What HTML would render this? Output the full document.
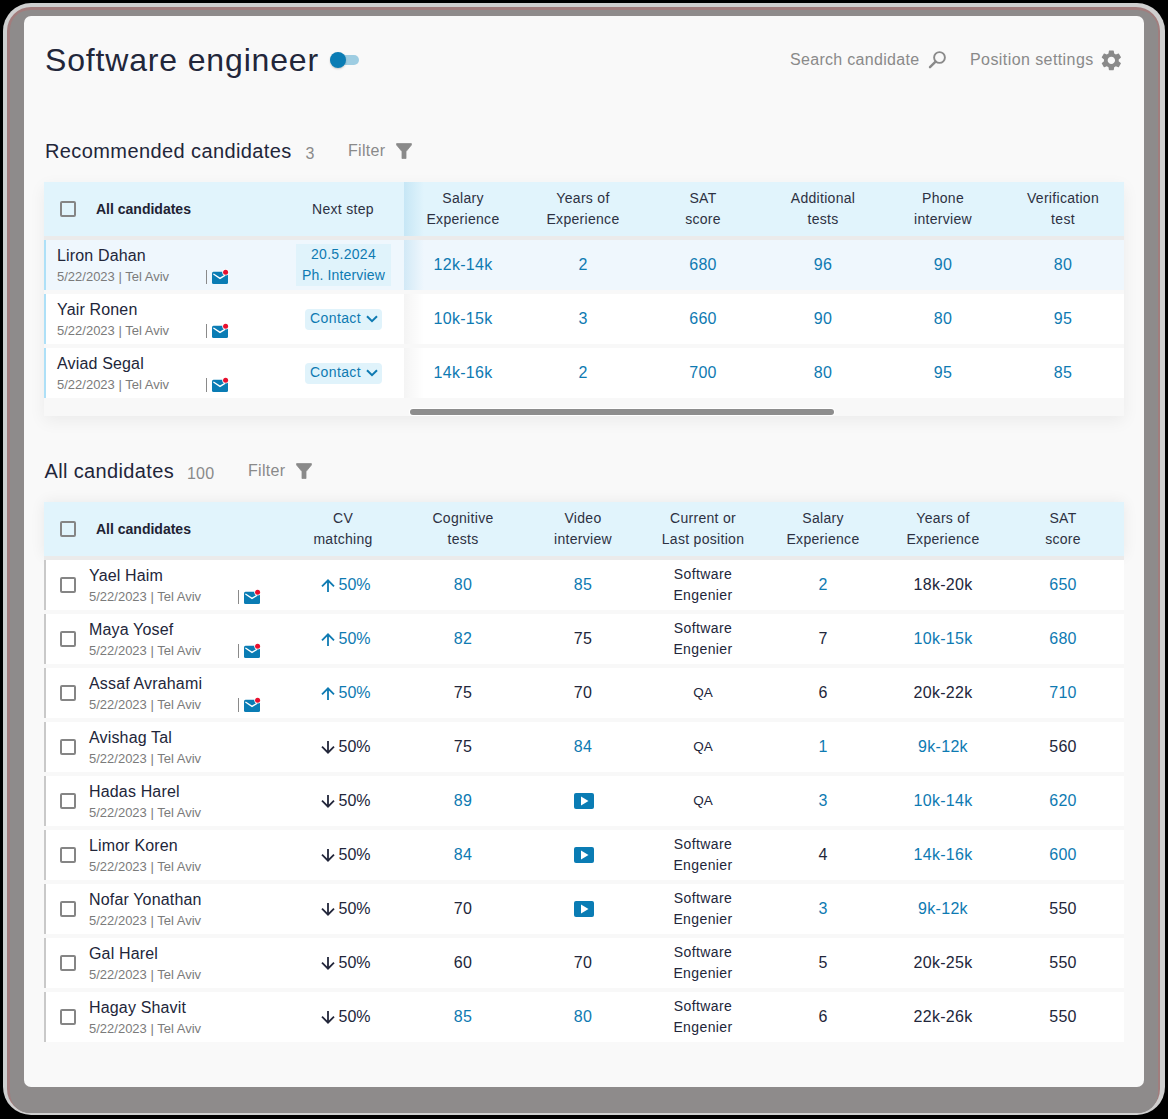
<!DOCTYPE html>
<html><head><meta charset="utf-8"><style>
html,body{margin:0;padding:0;}
body{width:1168px;height:1119px;background:#000;position:relative;overflow:hidden;font-family:"Liberation Sans", sans-serif;}
.t{position:absolute;white-space:nowrap;}
.r{position:absolute;}
</style></head><body>
<div class="r" style="left:3px;top:3px;width:1161.5px;height:1112px;background:#cfcfcf;border-radius:28px;"></div>
<div class="r" style="left:7px;top:7px;width:1153px;height:1106px;background:#a27d7d;border-radius:24px;"></div>
<div class="r" style="left:10px;top:10px;width:1147.7px;height:1103px;background:#8e8b8b;border-radius:20px;"></div>
<div class="r" style="left:24px;top:16px;width:1120px;height:1071px;background:#f9f9f9;border-radius:7px;"></div>
<div class="t" style="left:45px;top:40.91px;font-size:32px;line-height:38px;color:#22263a;letter-spacing:0.84px;">Software engineer</div>
<div class="r" style="left:330px;top:55px;width:29px;height:10px;background:#9ecde2;border-radius:5px;"></div>
<div class="r" style="left:330px;top:52px;width:16px;height:16px;background:#0a7cb4;border-radius:50%;box-shadow:0 1px 2px rgba(0,0,0,0.2);"></div>
<div class="t" style="left:790px;top:49.96px;font-size:16px;line-height:19px;color:#8a8a8a;letter-spacing:0.31px;">Search candidate</div>
<svg class="r" style="left:928px;top:51px" width="20" height="18" viewBox="0 0 20 18"><circle cx="11.5" cy="6.5" r="5.4" fill="none" stroke="#8a8a8a" stroke-width="1.9"/><line x1="7.6" y1="10.6" x2="2" y2="16.2" stroke="#8a8a8a" stroke-width="2.4" stroke-linecap="round"/></svg>
<div class="t" style="left:970px;top:49.96px;font-size:16px;line-height:19px;color:#8a8a8a;letter-spacing:0.42px;">Position settings</div>
<svg class="r" style="left:1098.7px;top:47.8px" width="24.7" height="24.7" viewBox="0 0 24 24"><path fill="#8a8a8a" d="M19.14 12.94c.04-.3.06-.61.06-.94 0-.32-.02-.64-.07-.94l2.03-1.58a.49.49 0 0 0 .12-.61l-1.92-3.32a.488.488 0 0 0-.59-.22l-2.39.96c-.5-.38-1.03-.7-1.62-.94l-.36-2.54a.484.484 0 0 0-.48-.41h-3.84c-.24 0-.43.17-.47.41l-.36 2.54c-.59.24-1.13.57-1.62.94l-2.39-.96c-.22-.08-.47 0-.59.22L2.74 8.87c-.12.21-.08.47.12.61l2.03 1.58c-.05.3-.09.63-.09.94s.02.64.07.94l-2.03 1.58a.49.49 0 0 0-.12.61l1.92 3.32c.12.22.37.29.59.22l2.39-.96c.5.38 1.03.7 1.62.94l.36 2.54c.05.24.24.41.48.41h3.84c.24 0 .44-.17.47-.41l.36-2.54c.59-.24 1.13-.56 1.62-.94l2.39.96c.22.08.47 0 .59-.22l1.92-3.32c.12-.22.07-.47-.12-.61l-2.01-1.58zM12 15.6c-1.98 0-3.6-1.62-3.6-3.6s1.62-3.6 3.6-3.6 3.6 1.62 3.6 3.6-1.62 3.6-3.6 3.6z"/></svg>
<div class="t" style="left:45px;top:139.07px;font-size:20px;line-height:24px;color:#22263a;letter-spacing:0.4px;">Recommended candidates</div>
<div class="t" style="left:305.5px;top:143.96px;font-size:16px;line-height:19px;color:#8a8a8a;">3</div>
<div class="t" style="left:348px;top:141.46px;font-size:16px;line-height:19px;color:#8a8a8a;letter-spacing:0.3px;">Filter</div>
<svg class="r" style="left:396px;top:143px" width="16" height="16" viewBox="0 0 16 16"><path fill="#8a8a8a" stroke="#8a8a8a" stroke-width="0.8" stroke-linejoin="round" d="M0.6 0.6 H15.4 V2 L10 8.6 V15.6 H6 V8.6 L0.6 2 Z"/></svg>
<div class="r" style="left:44px;top:182px;width:1080px;height:234px;background:#f8f8f8;box-shadow:0 5px 16px rgba(0,0,0,0.06);"></div>
<div class="r" style="left:44px;top:182px;width:1080px;height:54px;background:#e1f4fc;"></div>
<div class="r" style="left:44px;top:236px;width:1080px;height:4px;background:#ebebeb;"></div>
<div class="r" style="left:60px;top:201px;width:16px;height:16px;background:transparent;box-sizing:border-box;border:2px solid #858585;border-radius:2px;"></div>
<div class="t" style="left:96px;top:200.65px;font-size:14px;line-height:17px;color:#1e2233;font-weight:700;">All candidates</div>
<div class="t" style="left:283px;top:200.65px;font-size:14px;line-height:17px;color:#2d3142;letter-spacing:0.3px;width:120px;text-align:center;">Next step</div>
<div class="t" style="left:403px;top:189.65px;font-size:14px;line-height:17px;color:#2d3142;letter-spacing:0.3px;width:120px;text-align:center;">Salary</div>
<div class="t" style="left:403px;top:210.65px;font-size:14px;line-height:17px;color:#2d3142;letter-spacing:0.3px;width:120px;text-align:center;">Experience</div>
<div class="t" style="left:523px;top:189.65px;font-size:14px;line-height:17px;color:#2d3142;letter-spacing:0.3px;width:120px;text-align:center;">Years of</div>
<div class="t" style="left:523px;top:210.65px;font-size:14px;line-height:17px;color:#2d3142;letter-spacing:0.3px;width:120px;text-align:center;">Experience</div>
<div class="t" style="left:643px;top:189.65px;font-size:14px;line-height:17px;color:#2d3142;letter-spacing:0.3px;width:120px;text-align:center;">SAT</div>
<div class="t" style="left:643px;top:210.65px;font-size:14px;line-height:17px;color:#2d3142;letter-spacing:0.3px;width:120px;text-align:center;">score</div>
<div class="t" style="left:763px;top:189.65px;font-size:14px;line-height:17px;color:#2d3142;letter-spacing:0.3px;width:120px;text-align:center;">Additional</div>
<div class="t" style="left:763px;top:210.65px;font-size:14px;line-height:17px;color:#2d3142;letter-spacing:0.3px;width:120px;text-align:center;">tests</div>
<div class="t" style="left:883px;top:189.65px;font-size:14px;line-height:17px;color:#2d3142;letter-spacing:0.3px;width:120px;text-align:center;">Phone</div>
<div class="t" style="left:883px;top:210.65px;font-size:14px;line-height:17px;color:#2d3142;letter-spacing:0.3px;width:120px;text-align:center;">interview</div>
<div class="t" style="left:1003px;top:189.65px;font-size:14px;line-height:17px;color:#2d3142;letter-spacing:0.3px;width:120px;text-align:center;">Verification</div>
<div class="t" style="left:1003px;top:210.65px;font-size:14px;line-height:17px;color:#2d3142;letter-spacing:0.3px;width:120px;text-align:center;">test</div>
<div class="r" style="left:44px;top:240px;width:1080px;height:50px;background:#eff7fd;"></div>
<div class="r" style="left:44px;top:290px;width:1080px;height:4px;background:#f8f8f8;"></div>
<div class="r" style="left:44px;top:240px;width:2px;height:50px;background:#aee0f7;"></div>
<div class="t" style="left:57px;top:245.96px;font-size:16px;line-height:19px;color:#22263a;letter-spacing:0.16px;">Liron Dahan</div>
<div class="t" style="left:57px;top:268.50px;font-size:13px;line-height:16px;color:#7b7b7b;">5/22/2023 | Tel Aviv</div>
<div class="r" style="left:206px;top:270px;width:1px;height:14px;background:#8a8a8a;"></div>
<svg class="r" style="left:212px;top:269px" width="18" height="16" viewBox="0 0 18 16"><rect x="0" y="2.8" width="16" height="12.2" rx="1.5" fill="#0a7cb4"/><path d="M1.8 5.3 L8 9.4 L12.5 6.6" fill="none" stroke="#fff" stroke-width="1.3" stroke-linecap="round"/><circle cx="13.6" cy="3.3" r="3.3" fill="#fff"/><circle cx="13.6" cy="3.3" r="2.5" fill="#e8102e"/></svg>
<div class="t" style="left:403px;top:254.96px;font-size:16px;line-height:19px;color:#0e7ab2;letter-spacing:0.3px;width:120px;text-align:center;">12k-14k</div>
<div class="t" style="left:523px;top:254.96px;font-size:16px;line-height:19px;color:#0e7ab2;letter-spacing:0.3px;width:120px;text-align:center;">2</div>
<div class="t" style="left:643px;top:254.96px;font-size:16px;line-height:19px;color:#0e7ab2;letter-spacing:0.3px;width:120px;text-align:center;">680</div>
<div class="t" style="left:763px;top:254.96px;font-size:16px;line-height:19px;color:#0e7ab2;letter-spacing:0.3px;width:120px;text-align:center;">96</div>
<div class="t" style="left:883px;top:254.96px;font-size:16px;line-height:19px;color:#0e7ab2;letter-spacing:0.3px;width:120px;text-align:center;">90</div>
<div class="t" style="left:1003px;top:254.96px;font-size:16px;line-height:19px;color:#0e7ab2;letter-spacing:0.3px;width:120px;text-align:center;">80</div>
<div class="r" style="left:404px;top:240px;width:20px;height:50px;background:linear-gradient(to right, rgba(60,160,210,0.16), rgba(60,160,210,0));"></div>
<div class="r" style="left:44px;top:294px;width:1080px;height:50px;background:#ffffff;"></div>
<div class="r" style="left:44px;top:344px;width:1080px;height:4px;background:#f8f8f8;"></div>
<div class="r" style="left:44px;top:294px;width:2px;height:50px;background:#aee0f7;"></div>
<div class="t" style="left:57px;top:299.96px;font-size:16px;line-height:19px;color:#22263a;letter-spacing:0.16px;">Yair Ronen</div>
<div class="t" style="left:57px;top:322.50px;font-size:13px;line-height:16px;color:#7b7b7b;">5/22/2023 | Tel Aviv</div>
<div class="r" style="left:206px;top:324px;width:1px;height:14px;background:#8a8a8a;"></div>
<svg class="r" style="left:212px;top:323px" width="18" height="16" viewBox="0 0 18 16"><rect x="0" y="2.8" width="16" height="12.2" rx="1.5" fill="#0a7cb4"/><path d="M1.8 5.3 L8 9.4 L12.5 6.6" fill="none" stroke="#fff" stroke-width="1.3" stroke-linecap="round"/><circle cx="13.6" cy="3.3" r="3.3" fill="#fff"/><circle cx="13.6" cy="3.3" r="2.5" fill="#e8102e"/></svg>
<div class="t" style="left:403px;top:308.96px;font-size:16px;line-height:19px;color:#0e7ab2;letter-spacing:0.3px;width:120px;text-align:center;">10k-15k</div>
<div class="t" style="left:523px;top:308.96px;font-size:16px;line-height:19px;color:#0e7ab2;letter-spacing:0.3px;width:120px;text-align:center;">3</div>
<div class="t" style="left:643px;top:308.96px;font-size:16px;line-height:19px;color:#0e7ab2;letter-spacing:0.3px;width:120px;text-align:center;">660</div>
<div class="t" style="left:763px;top:308.96px;font-size:16px;line-height:19px;color:#0e7ab2;letter-spacing:0.3px;width:120px;text-align:center;">90</div>
<div class="t" style="left:883px;top:308.96px;font-size:16px;line-height:19px;color:#0e7ab2;letter-spacing:0.3px;width:120px;text-align:center;">80</div>
<div class="t" style="left:1003px;top:308.96px;font-size:16px;line-height:19px;color:#0e7ab2;letter-spacing:0.3px;width:120px;text-align:center;">95</div>
<div class="r" style="left:404px;top:294px;width:20px;height:50px;background:linear-gradient(to right, rgba(0,0,0,0.045), rgba(0,0,0,0));"></div>
<div class="r" style="left:44px;top:348px;width:1080px;height:50px;background:#ffffff;"></div>
<div class="r" style="left:44px;top:348px;width:2px;height:50px;background:#aee0f7;"></div>
<div class="t" style="left:57px;top:353.96px;font-size:16px;line-height:19px;color:#22263a;letter-spacing:0.16px;">Aviad Segal</div>
<div class="t" style="left:57px;top:376.50px;font-size:13px;line-height:16px;color:#7b7b7b;">5/22/2023 | Tel Aviv</div>
<div class="r" style="left:206px;top:378px;width:1px;height:14px;background:#8a8a8a;"></div>
<svg class="r" style="left:212px;top:377px" width="18" height="16" viewBox="0 0 18 16"><rect x="0" y="2.8" width="16" height="12.2" rx="1.5" fill="#0a7cb4"/><path d="M1.8 5.3 L8 9.4 L12.5 6.6" fill="none" stroke="#fff" stroke-width="1.3" stroke-linecap="round"/><circle cx="13.6" cy="3.3" r="3.3" fill="#fff"/><circle cx="13.6" cy="3.3" r="2.5" fill="#e8102e"/></svg>
<div class="t" style="left:403px;top:362.96px;font-size:16px;line-height:19px;color:#0e7ab2;letter-spacing:0.3px;width:120px;text-align:center;">14k-16k</div>
<div class="t" style="left:523px;top:362.96px;font-size:16px;line-height:19px;color:#0e7ab2;letter-spacing:0.3px;width:120px;text-align:center;">2</div>
<div class="t" style="left:643px;top:362.96px;font-size:16px;line-height:19px;color:#0e7ab2;letter-spacing:0.3px;width:120px;text-align:center;">700</div>
<div class="t" style="left:763px;top:362.96px;font-size:16px;line-height:19px;color:#0e7ab2;letter-spacing:0.3px;width:120px;text-align:center;">80</div>
<div class="t" style="left:883px;top:362.96px;font-size:16px;line-height:19px;color:#0e7ab2;letter-spacing:0.3px;width:120px;text-align:center;">95</div>
<div class="t" style="left:1003px;top:362.96px;font-size:16px;line-height:19px;color:#0e7ab2;letter-spacing:0.3px;width:120px;text-align:center;">85</div>
<div class="r" style="left:404px;top:348px;width:20px;height:50px;background:linear-gradient(to right, rgba(0,0,0,0.045), rgba(0,0,0,0));"></div>
<div class="r" style="left:296px;top:244px;width:95px;height:42px;background:#e0f3fb;"></div>
<div class="t" style="left:296px;top:245.65px;font-size:14px;line-height:17px;color:#0e7ab2;letter-spacing:0.3px;width:95px;text-align:center;">20.5.2024</div>
<div class="t" style="left:296px;top:266.65px;font-size:14px;line-height:17px;color:#0e7ab2;letter-spacing:0.16px;width:95px;text-align:center;">Ph. Interview</div>
<div class="r" style="left:305px;top:309px;width:77px;height:21px;background:#e0f3fb;border-radius:4px;"></div>
<div class="t" style="left:310px;top:310.25px;font-size:14px;line-height:17px;color:#0e7ab2;letter-spacing:0.4px;">Contact</div>
<svg class="r" style="left:366px;top:315px" width="12" height="8" viewBox="0 0 12 8"><path d="M1 1.2 L6 6.2 L11 1.2" fill="none" stroke="#0e7ab2" stroke-width="2"/></svg>
<div class="r" style="left:305px;top:363px;width:77px;height:21px;background:#e0f3fb;border-radius:4px;"></div>
<div class="t" style="left:310px;top:364.25px;font-size:14px;line-height:17px;color:#0e7ab2;letter-spacing:0.4px;">Contact</div>
<svg class="r" style="left:366px;top:369px" width="12" height="8" viewBox="0 0 12 8"><path d="M1 1.2 L6 6.2 L11 1.2" fill="none" stroke="#0e7ab2" stroke-width="2"/></svg>
<div class="r" style="left:404px;top:182px;width:20px;height:54px;background:linear-gradient(to right, rgba(60,160,210,0.16), rgba(60,160,210,0));"></div>
<div class="r" style="left:410px;top:409px;width:424px;height:6px;background:#8d8d8d;border-radius:3px;box-shadow:0 0 0 1px #fff;"></div>
<div class="t" style="left:44.5px;top:459.07px;font-size:20px;line-height:24px;color:#22263a;letter-spacing:0.36px;">All candidates</div>
<div class="t" style="left:187px;top:463.96px;font-size:16px;line-height:19px;color:#8a8a8a;letter-spacing:0.2px;">100</div>
<div class="t" style="left:248px;top:460.96px;font-size:16px;line-height:19px;color:#8a8a8a;letter-spacing:0.3px;">Filter</div>
<svg class="r" style="left:296px;top:463px" width="16" height="16" viewBox="0 0 16 16"><path fill="#8a8a8a" stroke="#8a8a8a" stroke-width="0.8" stroke-linejoin="round" d="M0.6 0.6 H15.4 V2 L10 8.6 V15.6 H6 V8.6 L0.6 2 Z"/></svg>
<div class="r" style="left:44px;top:502px;width:1080px;height:540px;background:#f8f8f8;"></div>
<div class="r" style="left:44px;top:502px;width:1080px;height:54px;background:#e1f4fc;box-shadow:0 0 14px rgba(0,0,0,0.07);"></div>
<div class="r" style="left:44px;top:556px;width:1080px;height:4px;background:#ebebeb;"></div>
<div class="r" style="left:60px;top:521px;width:16px;height:16px;background:transparent;box-sizing:border-box;border:2px solid #858585;border-radius:2px;"></div>
<div class="t" style="left:96px;top:520.65px;font-size:14px;line-height:17px;color:#1e2233;font-weight:700;">All candidates</div>
<div class="t" style="left:283px;top:509.65px;font-size:14px;line-height:17px;color:#2d3142;letter-spacing:0.3px;width:120px;text-align:center;">CV</div>
<div class="t" style="left:283px;top:530.65px;font-size:14px;line-height:17px;color:#2d3142;letter-spacing:0.3px;width:120px;text-align:center;">matching</div>
<div class="t" style="left:403px;top:509.65px;font-size:14px;line-height:17px;color:#2d3142;letter-spacing:0.3px;width:120px;text-align:center;">Cognitive</div>
<div class="t" style="left:403px;top:530.65px;font-size:14px;line-height:17px;color:#2d3142;letter-spacing:0.3px;width:120px;text-align:center;">tests</div>
<div class="t" style="left:523px;top:509.65px;font-size:14px;line-height:17px;color:#2d3142;letter-spacing:0.3px;width:120px;text-align:center;">Video</div>
<div class="t" style="left:523px;top:530.65px;font-size:14px;line-height:17px;color:#2d3142;letter-spacing:0.3px;width:120px;text-align:center;">interview</div>
<div class="t" style="left:643px;top:509.65px;font-size:14px;line-height:17px;color:#2d3142;letter-spacing:0.3px;width:120px;text-align:center;">Current or</div>
<div class="t" style="left:643px;top:530.65px;font-size:14px;line-height:17px;color:#2d3142;letter-spacing:0.3px;width:120px;text-align:center;">Last position</div>
<div class="t" style="left:763px;top:509.65px;font-size:14px;line-height:17px;color:#2d3142;letter-spacing:0.3px;width:120px;text-align:center;">Salary</div>
<div class="t" style="left:763px;top:530.65px;font-size:14px;line-height:17px;color:#2d3142;letter-spacing:0.3px;width:120px;text-align:center;">Experience</div>
<div class="t" style="left:883px;top:509.65px;font-size:14px;line-height:17px;color:#2d3142;letter-spacing:0.3px;width:120px;text-align:center;">Years of</div>
<div class="t" style="left:883px;top:530.65px;font-size:14px;line-height:17px;color:#2d3142;letter-spacing:0.3px;width:120px;text-align:center;">Experience</div>
<div class="t" style="left:1003px;top:509.65px;font-size:14px;line-height:17px;color:#2d3142;letter-spacing:0.3px;width:120px;text-align:center;">SAT</div>
<div class="t" style="left:1003px;top:530.65px;font-size:14px;line-height:17px;color:#2d3142;letter-spacing:0.3px;width:120px;text-align:center;">score</div>
<div class="r" style="left:44px;top:560px;width:1080px;height:50px;background:#ffffff;"></div>
<div class="r" style="left:44px;top:560px;width:2px;height:50px;background:#c9c9c9;"></div>
<div class="r" style="left:60px;top:577px;width:16px;height:16px;background:transparent;box-sizing:border-box;border:2px solid #858585;border-radius:2px;"></div>
<div class="t" style="left:89px;top:565.96px;font-size:16px;line-height:19px;color:#22263a;letter-spacing:0.16px;">Yael Haim</div>
<div class="t" style="left:89px;top:588.50px;font-size:13px;line-height:16px;color:#7b7b7b;">5/22/2023 | Tel Aviv</div>
<div class="r" style="left:238px;top:590px;width:1px;height:14px;background:#8a8a8a;"></div>
<svg class="r" style="left:244px;top:589px" width="18" height="16" viewBox="0 0 18 16"><rect x="0" y="2.8" width="16" height="12.2" rx="1.5" fill="#0a7cb4"/><path d="M1.8 5.3 L8 9.4 L12.5 6.6" fill="none" stroke="#fff" stroke-width="1.3" stroke-linecap="round"/><circle cx="13.6" cy="3.3" r="3.3" fill="#fff"/><circle cx="13.6" cy="3.3" r="2.5" fill="#e8102e"/></svg>
<svg class="r" style="left:321px;top:579px" width="14" height="14" viewBox="0 0 14 14"><path d="M7 1.5 V13 M1 7.3 L7 1.3 L13 7.3" fill="none" stroke="#0e7ab2" stroke-width="1.8"/></svg>
<div class="t" style="left:338.5px;top:575.46px;font-size:16px;line-height:19px;color:#0e7ab2;">50%</div>
<div class="t" style="left:403px;top:574.96px;font-size:16px;line-height:19px;color:#0e7ab2;letter-spacing:0.3px;width:120px;text-align:center;">80</div>
<div class="t" style="left:523px;top:574.96px;font-size:16px;line-height:19px;color:#0e7ab2;letter-spacing:0.3px;width:120px;text-align:center;">85</div>
<div class="t" style="left:643px;top:565.65px;font-size:14px;line-height:17px;color:#22263a;letter-spacing:0.4px;width:120px;text-align:center;">Software</div>
<div class="t" style="left:643px;top:586.65px;font-size:14px;line-height:17px;color:#22263a;letter-spacing:0.4px;width:120px;text-align:center;">Engenier</div>
<div class="t" style="left:763px;top:574.96px;font-size:16px;line-height:19px;color:#0e7ab2;letter-spacing:0.3px;width:120px;text-align:center;">2</div>
<div class="t" style="left:883px;top:574.96px;font-size:16px;line-height:19px;color:#22263a;letter-spacing:0.3px;width:120px;text-align:center;">18k-20k</div>
<div class="t" style="left:1003px;top:574.96px;font-size:16px;line-height:19px;color:#0e7ab2;letter-spacing:0.3px;width:120px;text-align:center;">650</div>
<div class="r" style="left:44px;top:614px;width:1080px;height:50px;background:#ffffff;"></div>
<div class="r" style="left:44px;top:614px;width:2px;height:50px;background:#c9c9c9;"></div>
<div class="r" style="left:60px;top:631px;width:16px;height:16px;background:transparent;box-sizing:border-box;border:2px solid #858585;border-radius:2px;"></div>
<div class="t" style="left:89px;top:619.96px;font-size:16px;line-height:19px;color:#22263a;letter-spacing:0.16px;">Maya Yosef</div>
<div class="t" style="left:89px;top:642.50px;font-size:13px;line-height:16px;color:#7b7b7b;">5/22/2023 | Tel Aviv</div>
<div class="r" style="left:238px;top:644px;width:1px;height:14px;background:#8a8a8a;"></div>
<svg class="r" style="left:244px;top:643px" width="18" height="16" viewBox="0 0 18 16"><rect x="0" y="2.8" width="16" height="12.2" rx="1.5" fill="#0a7cb4"/><path d="M1.8 5.3 L8 9.4 L12.5 6.6" fill="none" stroke="#fff" stroke-width="1.3" stroke-linecap="round"/><circle cx="13.6" cy="3.3" r="3.3" fill="#fff"/><circle cx="13.6" cy="3.3" r="2.5" fill="#e8102e"/></svg>
<svg class="r" style="left:321px;top:633px" width="14" height="14" viewBox="0 0 14 14"><path d="M7 1.5 V13 M1 7.3 L7 1.3 L13 7.3" fill="none" stroke="#0e7ab2" stroke-width="1.8"/></svg>
<div class="t" style="left:338.5px;top:629.46px;font-size:16px;line-height:19px;color:#0e7ab2;">50%</div>
<div class="t" style="left:403px;top:628.96px;font-size:16px;line-height:19px;color:#0e7ab2;letter-spacing:0.3px;width:120px;text-align:center;">82</div>
<div class="t" style="left:523px;top:628.96px;font-size:16px;line-height:19px;color:#22263a;letter-spacing:0.3px;width:120px;text-align:center;">75</div>
<div class="t" style="left:643px;top:619.65px;font-size:14px;line-height:17px;color:#22263a;letter-spacing:0.4px;width:120px;text-align:center;">Software</div>
<div class="t" style="left:643px;top:640.65px;font-size:14px;line-height:17px;color:#22263a;letter-spacing:0.4px;width:120px;text-align:center;">Engenier</div>
<div class="t" style="left:763px;top:628.96px;font-size:16px;line-height:19px;color:#22263a;letter-spacing:0.3px;width:120px;text-align:center;">7</div>
<div class="t" style="left:883px;top:628.96px;font-size:16px;line-height:19px;color:#0e7ab2;letter-spacing:0.3px;width:120px;text-align:center;">10k-15k</div>
<div class="t" style="left:1003px;top:628.96px;font-size:16px;line-height:19px;color:#0e7ab2;letter-spacing:0.3px;width:120px;text-align:center;">680</div>
<div class="r" style="left:44px;top:668px;width:1080px;height:50px;background:#ffffff;"></div>
<div class="r" style="left:44px;top:668px;width:2px;height:50px;background:#c9c9c9;"></div>
<div class="r" style="left:60px;top:685px;width:16px;height:16px;background:transparent;box-sizing:border-box;border:2px solid #858585;border-radius:2px;"></div>
<div class="t" style="left:89px;top:673.96px;font-size:16px;line-height:19px;color:#22263a;letter-spacing:0.16px;">Assaf Avrahami</div>
<div class="t" style="left:89px;top:696.50px;font-size:13px;line-height:16px;color:#7b7b7b;">5/22/2023 | Tel Aviv</div>
<div class="r" style="left:238px;top:698px;width:1px;height:14px;background:#8a8a8a;"></div>
<svg class="r" style="left:244px;top:697px" width="18" height="16" viewBox="0 0 18 16"><rect x="0" y="2.8" width="16" height="12.2" rx="1.5" fill="#0a7cb4"/><path d="M1.8 5.3 L8 9.4 L12.5 6.6" fill="none" stroke="#fff" stroke-width="1.3" stroke-linecap="round"/><circle cx="13.6" cy="3.3" r="3.3" fill="#fff"/><circle cx="13.6" cy="3.3" r="2.5" fill="#e8102e"/></svg>
<svg class="r" style="left:321px;top:687px" width="14" height="14" viewBox="0 0 14 14"><path d="M7 1.5 V13 M1 7.3 L7 1.3 L13 7.3" fill="none" stroke="#0e7ab2" stroke-width="1.8"/></svg>
<div class="t" style="left:338.5px;top:683.46px;font-size:16px;line-height:19px;color:#0e7ab2;">50%</div>
<div class="t" style="left:403px;top:682.96px;font-size:16px;line-height:19px;color:#22263a;letter-spacing:0.3px;width:120px;text-align:center;">75</div>
<div class="t" style="left:523px;top:682.96px;font-size:16px;line-height:19px;color:#22263a;letter-spacing:0.3px;width:120px;text-align:center;">70</div>
<div class="t" style="left:643px;top:685.32px;font-size:13.5px;line-height:16px;color:#22263a;width:120px;text-align:center;">QA</div>
<div class="t" style="left:763px;top:682.96px;font-size:16px;line-height:19px;color:#22263a;letter-spacing:0.3px;width:120px;text-align:center;">6</div>
<div class="t" style="left:883px;top:682.96px;font-size:16px;line-height:19px;color:#22263a;letter-spacing:0.3px;width:120px;text-align:center;">20k-22k</div>
<div class="t" style="left:1003px;top:682.96px;font-size:16px;line-height:19px;color:#0e7ab2;letter-spacing:0.3px;width:120px;text-align:center;">710</div>
<div class="r" style="left:44px;top:722px;width:1080px;height:50px;background:#ffffff;"></div>
<div class="r" style="left:44px;top:722px;width:2px;height:50px;background:#c9c9c9;"></div>
<div class="r" style="left:60px;top:739px;width:16px;height:16px;background:transparent;box-sizing:border-box;border:2px solid #858585;border-radius:2px;"></div>
<div class="t" style="left:89px;top:727.96px;font-size:16px;line-height:19px;color:#22263a;letter-spacing:0.16px;">Avishag Tal</div>
<div class="t" style="left:89px;top:750.50px;font-size:13px;line-height:16px;color:#7b7b7b;">5/22/2023 | Tel Aviv</div>
<svg class="r" style="left:321px;top:741px" width="14" height="14" viewBox="0 0 14 14"><path d="M7 0 V11.5 M1 5.7 L7 11.7 L13 5.7" fill="none" stroke="#22263a" stroke-width="1.8"/></svg>
<div class="t" style="left:338.5px;top:737.46px;font-size:16px;line-height:19px;color:#22263a;">50%</div>
<div class="t" style="left:403px;top:736.96px;font-size:16px;line-height:19px;color:#22263a;letter-spacing:0.3px;width:120px;text-align:center;">75</div>
<div class="t" style="left:523px;top:736.96px;font-size:16px;line-height:19px;color:#0e7ab2;letter-spacing:0.3px;width:120px;text-align:center;">84</div>
<div class="t" style="left:643px;top:739.32px;font-size:13.5px;line-height:16px;color:#22263a;width:120px;text-align:center;">QA</div>
<div class="t" style="left:763px;top:736.96px;font-size:16px;line-height:19px;color:#0e7ab2;letter-spacing:0.3px;width:120px;text-align:center;">1</div>
<div class="t" style="left:883px;top:736.96px;font-size:16px;line-height:19px;color:#0e7ab2;letter-spacing:0.3px;width:120px;text-align:center;">9k-12k</div>
<div class="t" style="left:1003px;top:736.96px;font-size:16px;line-height:19px;color:#22263a;letter-spacing:0.3px;width:120px;text-align:center;">560</div>
<div class="r" style="left:44px;top:776px;width:1080px;height:50px;background:#ffffff;"></div>
<div class="r" style="left:44px;top:776px;width:2px;height:50px;background:#c9c9c9;"></div>
<div class="r" style="left:60px;top:793px;width:16px;height:16px;background:transparent;box-sizing:border-box;border:2px solid #858585;border-radius:2px;"></div>
<div class="t" style="left:89px;top:781.96px;font-size:16px;line-height:19px;color:#22263a;letter-spacing:0.16px;">Hadas Harel</div>
<div class="t" style="left:89px;top:804.50px;font-size:13px;line-height:16px;color:#7b7b7b;">5/22/2023 | Tel Aviv</div>
<svg class="r" style="left:321px;top:795px" width="14" height="14" viewBox="0 0 14 14"><path d="M7 0 V11.5 M1 5.7 L7 11.7 L13 5.7" fill="none" stroke="#22263a" stroke-width="1.8"/></svg>
<div class="t" style="left:338.5px;top:791.46px;font-size:16px;line-height:19px;color:#22263a;">50%</div>
<div class="t" style="left:403px;top:790.96px;font-size:16px;line-height:19px;color:#0e7ab2;letter-spacing:0.3px;width:120px;text-align:center;">89</div>
<svg class="r" style="left:574px;top:793px" width="20" height="16" viewBox="0 0 20 16"><rect width="20" height="16" rx="2" fill="#0a7cb4"/><path d="M7 3.6 V12.5 L14.5 8 Z" fill="#fff"/></svg>
<div class="t" style="left:643px;top:793.32px;font-size:13.5px;line-height:16px;color:#22263a;width:120px;text-align:center;">QA</div>
<div class="t" style="left:763px;top:790.96px;font-size:16px;line-height:19px;color:#0e7ab2;letter-spacing:0.3px;width:120px;text-align:center;">3</div>
<div class="t" style="left:883px;top:790.96px;font-size:16px;line-height:19px;color:#0e7ab2;letter-spacing:0.3px;width:120px;text-align:center;">10k-14k</div>
<div class="t" style="left:1003px;top:790.96px;font-size:16px;line-height:19px;color:#0e7ab2;letter-spacing:0.3px;width:120px;text-align:center;">620</div>
<div class="r" style="left:44px;top:830px;width:1080px;height:50px;background:#ffffff;"></div>
<div class="r" style="left:44px;top:830px;width:2px;height:50px;background:#c9c9c9;"></div>
<div class="r" style="left:60px;top:847px;width:16px;height:16px;background:transparent;box-sizing:border-box;border:2px solid #858585;border-radius:2px;"></div>
<div class="t" style="left:89px;top:835.96px;font-size:16px;line-height:19px;color:#22263a;letter-spacing:0.16px;">Limor Koren</div>
<div class="t" style="left:89px;top:858.50px;font-size:13px;line-height:16px;color:#7b7b7b;">5/22/2023 | Tel Aviv</div>
<svg class="r" style="left:321px;top:849px" width="14" height="14" viewBox="0 0 14 14"><path d="M7 0 V11.5 M1 5.7 L7 11.7 L13 5.7" fill="none" stroke="#22263a" stroke-width="1.8"/></svg>
<div class="t" style="left:338.5px;top:845.46px;font-size:16px;line-height:19px;color:#22263a;">50%</div>
<div class="t" style="left:403px;top:844.96px;font-size:16px;line-height:19px;color:#0e7ab2;letter-spacing:0.3px;width:120px;text-align:center;">84</div>
<svg class="r" style="left:574px;top:847px" width="20" height="16" viewBox="0 0 20 16"><rect width="20" height="16" rx="2" fill="#0a7cb4"/><path d="M7 3.6 V12.5 L14.5 8 Z" fill="#fff"/></svg>
<div class="t" style="left:643px;top:835.65px;font-size:14px;line-height:17px;color:#22263a;letter-spacing:0.4px;width:120px;text-align:center;">Software</div>
<div class="t" style="left:643px;top:856.65px;font-size:14px;line-height:17px;color:#22263a;letter-spacing:0.4px;width:120px;text-align:center;">Engenier</div>
<div class="t" style="left:763px;top:844.96px;font-size:16px;line-height:19px;color:#22263a;letter-spacing:0.3px;width:120px;text-align:center;">4</div>
<div class="t" style="left:883px;top:844.96px;font-size:16px;line-height:19px;color:#0e7ab2;letter-spacing:0.3px;width:120px;text-align:center;">14k-16k</div>
<div class="t" style="left:1003px;top:844.96px;font-size:16px;line-height:19px;color:#0e7ab2;letter-spacing:0.3px;width:120px;text-align:center;">600</div>
<div class="r" style="left:44px;top:884px;width:1080px;height:50px;background:#ffffff;"></div>
<div class="r" style="left:44px;top:884px;width:2px;height:50px;background:#c9c9c9;"></div>
<div class="r" style="left:60px;top:901px;width:16px;height:16px;background:transparent;box-sizing:border-box;border:2px solid #858585;border-radius:2px;"></div>
<div class="t" style="left:89px;top:889.96px;font-size:16px;line-height:19px;color:#22263a;letter-spacing:0.16px;">Nofar Yonathan</div>
<div class="t" style="left:89px;top:912.50px;font-size:13px;line-height:16px;color:#7b7b7b;">5/22/2023 | Tel Aviv</div>
<svg class="r" style="left:321px;top:903px" width="14" height="14" viewBox="0 0 14 14"><path d="M7 0 V11.5 M1 5.7 L7 11.7 L13 5.7" fill="none" stroke="#22263a" stroke-width="1.8"/></svg>
<div class="t" style="left:338.5px;top:899.46px;font-size:16px;line-height:19px;color:#22263a;">50%</div>
<div class="t" style="left:403px;top:898.96px;font-size:16px;line-height:19px;color:#22263a;letter-spacing:0.3px;width:120px;text-align:center;">70</div>
<svg class="r" style="left:574px;top:901px" width="20" height="16" viewBox="0 0 20 16"><rect width="20" height="16" rx="2" fill="#0a7cb4"/><path d="M7 3.6 V12.5 L14.5 8 Z" fill="#fff"/></svg>
<div class="t" style="left:643px;top:889.65px;font-size:14px;line-height:17px;color:#22263a;letter-spacing:0.4px;width:120px;text-align:center;">Software</div>
<div class="t" style="left:643px;top:910.65px;font-size:14px;line-height:17px;color:#22263a;letter-spacing:0.4px;width:120px;text-align:center;">Engenier</div>
<div class="t" style="left:763px;top:898.96px;font-size:16px;line-height:19px;color:#0e7ab2;letter-spacing:0.3px;width:120px;text-align:center;">3</div>
<div class="t" style="left:883px;top:898.96px;font-size:16px;line-height:19px;color:#0e7ab2;letter-spacing:0.3px;width:120px;text-align:center;">9k-12k</div>
<div class="t" style="left:1003px;top:898.96px;font-size:16px;line-height:19px;color:#22263a;letter-spacing:0.3px;width:120px;text-align:center;">550</div>
<div class="r" style="left:44px;top:938px;width:1080px;height:50px;background:#ffffff;"></div>
<div class="r" style="left:44px;top:938px;width:2px;height:50px;background:#c9c9c9;"></div>
<div class="r" style="left:60px;top:955px;width:16px;height:16px;background:transparent;box-sizing:border-box;border:2px solid #858585;border-radius:2px;"></div>
<div class="t" style="left:89px;top:943.96px;font-size:16px;line-height:19px;color:#22263a;letter-spacing:0.16px;">Gal Harel</div>
<div class="t" style="left:89px;top:966.50px;font-size:13px;line-height:16px;color:#7b7b7b;">5/22/2023 | Tel Aviv</div>
<svg class="r" style="left:321px;top:957px" width="14" height="14" viewBox="0 0 14 14"><path d="M7 0 V11.5 M1 5.7 L7 11.7 L13 5.7" fill="none" stroke="#22263a" stroke-width="1.8"/></svg>
<div class="t" style="left:338.5px;top:953.46px;font-size:16px;line-height:19px;color:#22263a;">50%</div>
<div class="t" style="left:403px;top:952.96px;font-size:16px;line-height:19px;color:#22263a;letter-spacing:0.3px;width:120px;text-align:center;">60</div>
<div class="t" style="left:523px;top:952.96px;font-size:16px;line-height:19px;color:#22263a;letter-spacing:0.3px;width:120px;text-align:center;">70</div>
<div class="t" style="left:643px;top:943.65px;font-size:14px;line-height:17px;color:#22263a;letter-spacing:0.4px;width:120px;text-align:center;">Software</div>
<div class="t" style="left:643px;top:964.65px;font-size:14px;line-height:17px;color:#22263a;letter-spacing:0.4px;width:120px;text-align:center;">Engenier</div>
<div class="t" style="left:763px;top:952.96px;font-size:16px;line-height:19px;color:#22263a;letter-spacing:0.3px;width:120px;text-align:center;">5</div>
<div class="t" style="left:883px;top:952.96px;font-size:16px;line-height:19px;color:#22263a;letter-spacing:0.3px;width:120px;text-align:center;">20k-25k</div>
<div class="t" style="left:1003px;top:952.96px;font-size:16px;line-height:19px;color:#22263a;letter-spacing:0.3px;width:120px;text-align:center;">550</div>
<div class="r" style="left:44px;top:992px;width:1080px;height:50px;background:#ffffff;"></div>
<div class="r" style="left:44px;top:992px;width:2px;height:50px;background:#c9c9c9;"></div>
<div class="r" style="left:60px;top:1009px;width:16px;height:16px;background:transparent;box-sizing:border-box;border:2px solid #858585;border-radius:2px;"></div>
<div class="t" style="left:89px;top:997.96px;font-size:16px;line-height:19px;color:#22263a;letter-spacing:0.16px;">Hagay Shavit</div>
<div class="t" style="left:89px;top:1020.50px;font-size:13px;line-height:16px;color:#7b7b7b;">5/22/2023 | Tel Aviv</div>
<svg class="r" style="left:321px;top:1011px" width="14" height="14" viewBox="0 0 14 14"><path d="M7 0 V11.5 M1 5.7 L7 11.7 L13 5.7" fill="none" stroke="#22263a" stroke-width="1.8"/></svg>
<div class="t" style="left:338.5px;top:1007.46px;font-size:16px;line-height:19px;color:#22263a;">50%</div>
<div class="t" style="left:403px;top:1006.96px;font-size:16px;line-height:19px;color:#0e7ab2;letter-spacing:0.3px;width:120px;text-align:center;">85</div>
<div class="t" style="left:523px;top:1006.96px;font-size:16px;line-height:19px;color:#0e7ab2;letter-spacing:0.3px;width:120px;text-align:center;">80</div>
<div class="t" style="left:643px;top:997.65px;font-size:14px;line-height:17px;color:#22263a;letter-spacing:0.4px;width:120px;text-align:center;">Software</div>
<div class="t" style="left:643px;top:1018.65px;font-size:14px;line-height:17px;color:#22263a;letter-spacing:0.4px;width:120px;text-align:center;">Engenier</div>
<div class="t" style="left:763px;top:1006.96px;font-size:16px;line-height:19px;color:#22263a;letter-spacing:0.3px;width:120px;text-align:center;">6</div>
<div class="t" style="left:883px;top:1006.96px;font-size:16px;line-height:19px;color:#22263a;letter-spacing:0.3px;width:120px;text-align:center;">22k-26k</div>
<div class="t" style="left:1003px;top:1006.96px;font-size:16px;line-height:19px;color:#22263a;letter-spacing:0.3px;width:120px;text-align:center;">550</div>
</body></html>
